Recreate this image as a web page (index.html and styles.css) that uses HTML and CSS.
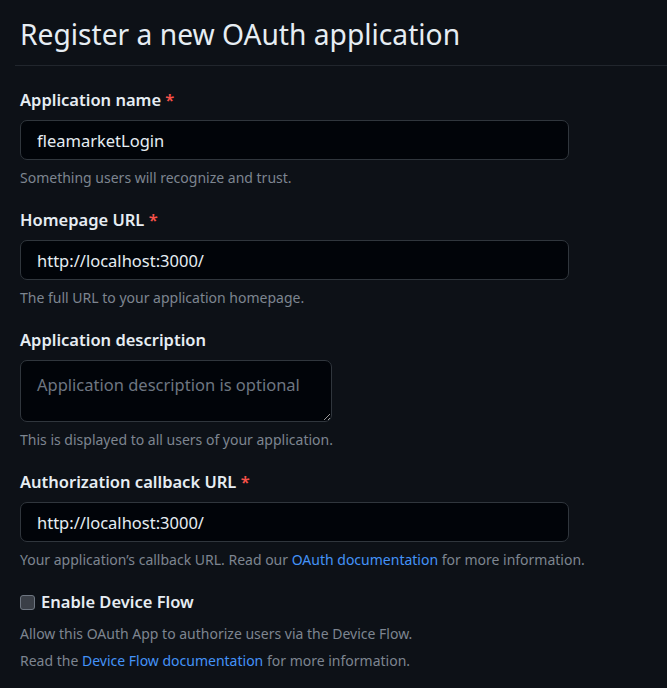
FILE: index.html
```html
<!DOCTYPE html>
<html lang="en">
<head>
<meta charset="utf-8">
<title>Register a new OAuth application</title>
<link rel="stylesheet" href="styles.css">
</head>
<body>
<div class="page">
  <div class="subhead">
    <h2 class="subhead-title">Register a new OAuth application</h2>
  </div>
  <form class="form">
    <div class="group">
      <label class="label" for="name">Application name <span class="req">*</span></label>
      <input class="input" id="name" type="text" value="fleamarketLogin">
      <p class="note">Something users will recognize and trust.</p>
    </div>
    <div class="group">
      <label class="label" for="url">Homepage URL <span class="req">*</span></label>
      <input class="input" id="url" type="text" value="http://localhost:3000/">
      <p class="note">The full URL to your application homepage.</p>
    </div>
    <div class="group">
      <label class="label" for="desc">Application description</label>
      <textarea class="textarea" id="desc" placeholder="Application description is optional"></textarea>
      <p class="note">This is displayed to all users of your application.</p>
    </div>
    <div class="group">
      <label class="label" for="cb">Authorization callback URL <span class="req">*</span></label>
      <input class="input" id="cb" type="text" value="http://localhost:3000/">
      <p class="note">Your application’s callback URL. Read our <a class="link" href="#">OAuth documentation</a> for more information.</p>
    </div>
    <div class="group check-group">
      <label class="check-row"><span class="checkbox"></span><span class="check-label">Enable Device Flow</span></label>
      <p class="note note-tall">Allow this OAuth App to authorize users via the Device Flow.</p>
      <p class="note note-tall">Read the <a class="link" href="#">Device Flow documentation</a> for more information.</p>
    </div>
  </form>
</div>
</body>
</html>
```
FILE: styles.css
```css
* { box-sizing: border-box; }
html, body {
  margin: 0;
  background: #0d1117;
  color: #e6edf3;
  font-family: "Noto Sans", "Open Sans", sans-serif;
}
.page {
  padding: 15px 0 0 15px;
}
.subhead {
  border-bottom: 1px solid #21262d;
  padding: 0 0 12px 5px;
}
.subhead-title {
  margin: 0;
  font-size: 28.2px;
  font-weight: 400;
  line-height: 38px;
  color: #e6edf3;
}
.form {
  padding: 23px 0 0 5px;
}
.group {
  margin-bottom: 21px;
}
.label {
  display: block;
  font-size: 16.5px;
  font-weight: 600;
  line-height: 22px;
  margin-bottom: 9px;
  color: #e6edf3;
}
.req { color: #f85149; }
.input {
  display: block;
  width: 549px;
  height: 40px;
  padding: 0 16px;
  background: #010409;
  border: 1px solid #30363d;
  border-radius: 7px;
  color: #e6edf3;
  font-family: inherit;
  font-size: 16.5px;
  outline: none;
}
.textarea {
  display: block;
  width: 312px;
  height: 62px;
  padding: 11px 16px;
  background: #010409;
  border: 1px solid #30363d;
  border-radius: 7px;
  color: #e6edf3;
  font-family: inherit;
  font-size: 16.5px;
  line-height: 26px;
  resize: vertical;
  outline: none;
}
.textarea::placeholder { color: #6e7681; }
.note {
  margin: 8px 0 0;
  font-size: 14px;
  line-height: 20px;
  color: #7d8590;
}
.link { color: #4493f8; text-decoration: none; }
.check-row {
  display: flex;
  align-items: center;
  gap: 6px;
  height: 22px;
}
.checkbox {
  width: 15px;
  height: 15px;
  border: 1px solid #6e7681;
  border-radius: 3px;
  background: #3a3f47;
}
.check-label {
  font-size: 16.5px;
  font-weight: 600;
  line-height: 22px;
}
.note-tall {
  margin: 0;
  line-height: 27px;
}
.check-row + .note-tall { margin-top: 7px; }
```
